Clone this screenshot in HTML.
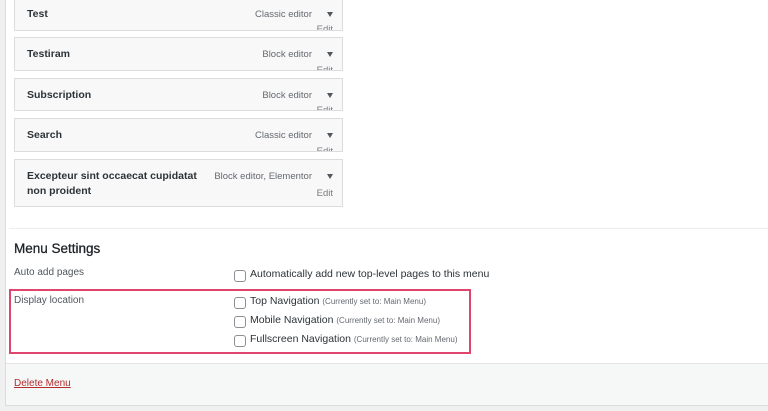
<!DOCTYPE html>
<html><head><meta charset="utf-8"><style>
*{margin:0;padding:0;box-sizing:border-box}
body{width:768px;height:411px;overflow:hidden;background:#f0f0f1;font-family:"Liberation Sans",sans-serif;color:#1d2327;position:relative}
.panel{position:absolute;left:5px;top:0;width:763px;height:406px;background:#fff;border-left:1px solid #dcdcde;border-bottom:1px solid #dcdcde}
.item{position:absolute;left:14px;width:329px;background:#f8f8f8;border:1px solid #dcdcde;overflow:hidden}
.t{position:absolute;left:12px;font-size:10.5px;font-weight:bold;color:#2c3338;line-height:15px}
.ty{position:absolute;right:30px;font-size:9.5px;color:#646970}
.ar{position:absolute;right:9px;width:0;height:0;border-left:3.5px solid transparent;border-right:3.5px solid transparent;border-top:5px solid #50575e}
.ed{position:absolute;right:9px;font-size:9.5px;color:#787c82}
.abs{position:absolute}
.cb{position:absolute;left:234px;width:12px;height:12px;border:1px solid #8c8f94;border-radius:3px;background:#fff}
.lbl{position:absolute;left:250px;font-size:10.5px;color:#2c3338}
.lbl small{font-size:8px;color:#646970}
</style></head><body>
<div class="panel"></div>
<div class="item" style="top:-4px;height:35px"><span class="t" style="top:10px">Test</span><span class="ty" style="top:12px">Classic editor</span><span class="ar" style="top:15px"></span><span class="ed" style="top:27px">Edit</span></div>
<div class="item" style="top:37px;height:34px"><span class="t" style="top:9px">Testiram</span><span class="ty" style="top:11px">Block editor</span><span class="ar" style="top:14px"></span><span class="ed" style="top:27px">Edit</span></div>
<div class="item" style="top:78px;height:33px"><span class="t" style="top:9px">Subscription</span><span class="ty" style="top:11px">Block editor</span><span class="ar" style="top:14px"></span><span class="ed" style="top:26px">Edit</span></div>
<div class="item" style="top:118px;height:34px"><span class="t" style="top:9px">Search</span><span class="ty" style="top:11px">Classic editor</span><span class="ar" style="top:14px"></span><span class="ed" style="top:27px">Edit</span></div>
<div class="item" style="top:159px;height:48px"><span class="t" style="top:9px">Excepteur sint occaecat cupidatat<br>non proident</span><span class="ty" style="top:11px">Block editor, Elementor</span><span class="ar" style="top:14px"></span><span class="ed" style="top:28px">Edit</span></div>
<div class="abs" style="left:9px;top:228px;width:759px;height:1px;background:#ededed"></div>
<div class="abs" style="left:14px;top:241px;font-size:13.5px;color:#1d2327;-webkit-text-stroke:0.3px #1d2327">Menu Settings</div>
<div class="abs" style="left:14px;top:267px;font-size:10px;color:#50575e">Auto add pages</div>
<div class="cb" style="top:270px"></div><div class="lbl" style="top:268px">Automatically add new top-level pages to this menu</div>
<div class="abs" style="left:9px;top:289px;width:462px;height:65px;border:2px solid #e0456d"></div>
<div class="abs" style="left:14px;top:295px;font-size:10px;color:#50575e">Display location</div>
<div class="cb" style="top:297px"></div><div class="lbl" style="top:295px">Top Navigation <small>(Currently set to: Main Menu)</small></div>
<div class="cb" style="top:316px"></div><div class="lbl" style="top:314px">Mobile Navigation <small>(Currently set to: Main Menu)</small></div>
<div class="cb" style="top:335px"></div><div class="lbl" style="top:333px">Fullscreen Navigation <small>(Currently set to: Main Menu)</small></div>
<div class="abs" style="left:6px;top:363px;width:762px;height:42px;background:#f6f7f7;border-top:1px solid #e5e5e5"></div>
<div class="abs" style="left:14px;top:378px;font-size:10px;color:#b32d2e;text-decoration:underline">Delete Menu</div>
</body></html>
